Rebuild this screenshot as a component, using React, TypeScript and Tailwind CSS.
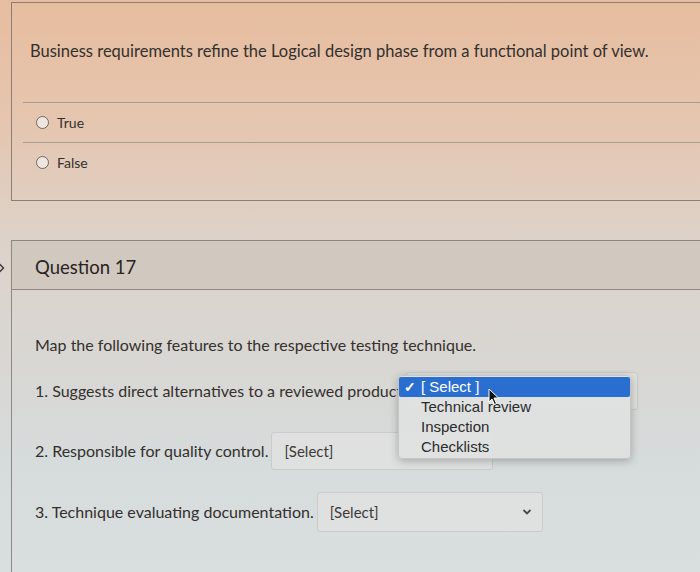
import React from "react";

function Radio() {
  return (
    <span className="inline-block w-[13px] h-[13px] rounded-full border border-[#6f6862] bg-[#efe6df]" />
  );
}

function SelectBox({ className, chevron, hideText }: { className: string; chevron?: boolean; hideText?: boolean }) {
  return (
    <div
      className={
        "flex items-center justify-between border border-[#c9ccca] rounded-[3px] bg-[#e4e4e2]/60 pl-[12px] pr-[10px] " +
        className
      }
    >
      {hideText ? <span /> : <span className="text-[15px] text-[#3d3a38]">[Select]</span>}
      {chevron ? (
        <svg width="10" height="8" viewBox="0 0 10 8">
          <path d="M1.5 2 L5 5.5 L8.5 2" fill="none" stroke="#4a4a4a" strokeWidth="1.8" />
        </svg>
      ) : null}
    </div>
  );
}

export default function App() {
  return (
    <div
      className="relative w-[700px] h-[572px] overflow-hidden text-[#34302d] bg-[linear-gradient(180deg,#e7bd9f_0%,#e5c6b0_22%,#ddd2ca_42%,#d9d6d2_60%,#d6dbdb_80%,#d9dedf_100%)]"
      style={{ fontFamily: "Lato, 'Open Sans', sans-serif" }}
    >
      {/* Question 16 box */}
      <div className="ml-[11px] mt-[2px] h-[199px] border border-r-0 border-[#8c7e74] flex flex-col">
        <div className="pl-[18px] pt-[36px] h-[99px] text-[16.5px]">
          Business requirements refine the Logical design phase from a functional point of view.
        </div>
        <div className="ml-[11px] border-t border-[#a89b92] h-[40px] flex items-center gap-[8px] pl-[13px] text-[14px]">
          <Radio />
          <span>True</span>
        </div>
        <div className="ml-[11px] border-t border-[#a89b92] h-[40px] flex items-center gap-[8px] pl-[13px] text-[14px]">
          <Radio />
          <span>False</span>
        </div>
      </div>

      {/* Question 17 */}
      <div className="relative ml-[11px] mt-[39px] border border-r-0 border-b-0 border-[#8f8881] h-[400px]">
        <div className="absolute -left-[16px] top-[20px]">
          <svg width="10" height="14" viewBox="0 0 10 14">
            <path d="M2 1.5 L7.5 7 L2 12.5" fill="none" stroke="#3a3633" strokeWidth="1.4" />
          </svg>
        </div>
        <div className="h-[49px] bg-[#cec6bd]/80 border-b border-[#8f8881] flex items-center pl-[23px] pt-[5px] text-[18.5px] text-[#28231f]">
          Question 17
        </div>
        <div className="pl-[23px] pt-[45px] text-[16px]">
          <div className="h-[20px] leading-[20px]">Map the following features to the respective testing technique.</div>
          <div className="mt-[17px] flex items-center h-[38px]">
            <span>1. Suggests direct alternatives to a reviewed product</span>
            <SelectBox className="ml-[4px] w-[232px] h-[38px]" hideText />
          </div>
          <div className="mt-[22px] flex items-center h-[38px]">
            <span>2. Responsible for quality control.</span>
            <SelectBox className="ml-[3px] w-[222px] h-[38px]" />
          </div>
          <div className="mt-[22px] flex items-center h-[40px]">
            <span>3. Technique evaluating documentation.</span>
            <SelectBox className="ml-[3px] w-[226px] h-[40px]" chevron />
          </div>
        </div>
      </div>

      {/* Dropdown menu */}
      <div
        className="absolute left-[398px] top-[375px] w-[233px] rounded-[4px] bg-[#dfe1e0]/95 shadow-[0_2px_8px_rgba(0,0,0,0.25)] border border-[#c3c6c5] py-[1px] text-[15px] text-[#2b2b2b]"
        style={{ fontFamily: "'Liberation Sans', Arial, sans-serif" }}
      >
        <div className="h-[20px] bg-[#2a6fd0] text-white flex items-center pl-[5px] rounded-[2px]">
          <span className="w-[17px] text-[14px] font-bold">✓</span>
          <span>[ Select ]</span>
        </div>
        <div className="h-[20px] flex items-center pl-[22px]">Technical review</div>
        <div className="h-[20px] flex items-center pl-[22px]">Inspection</div>
        <div className="h-[20px] flex items-center pl-[22px]">Checklists</div>
      </div>

      {/* Mouse cursor */}
      <svg className="absolute left-[488px] top-[388px]" width="12" height="18" viewBox="0 0 12 18">
        <path d="M1 1 L1 14 L4 11 L6.5 16.5 L8.5 15.5 L6 10 L10.5 10 Z" fill="#111" stroke="#fff" strokeWidth="1" />
      </svg>
    </div>
  );
}
